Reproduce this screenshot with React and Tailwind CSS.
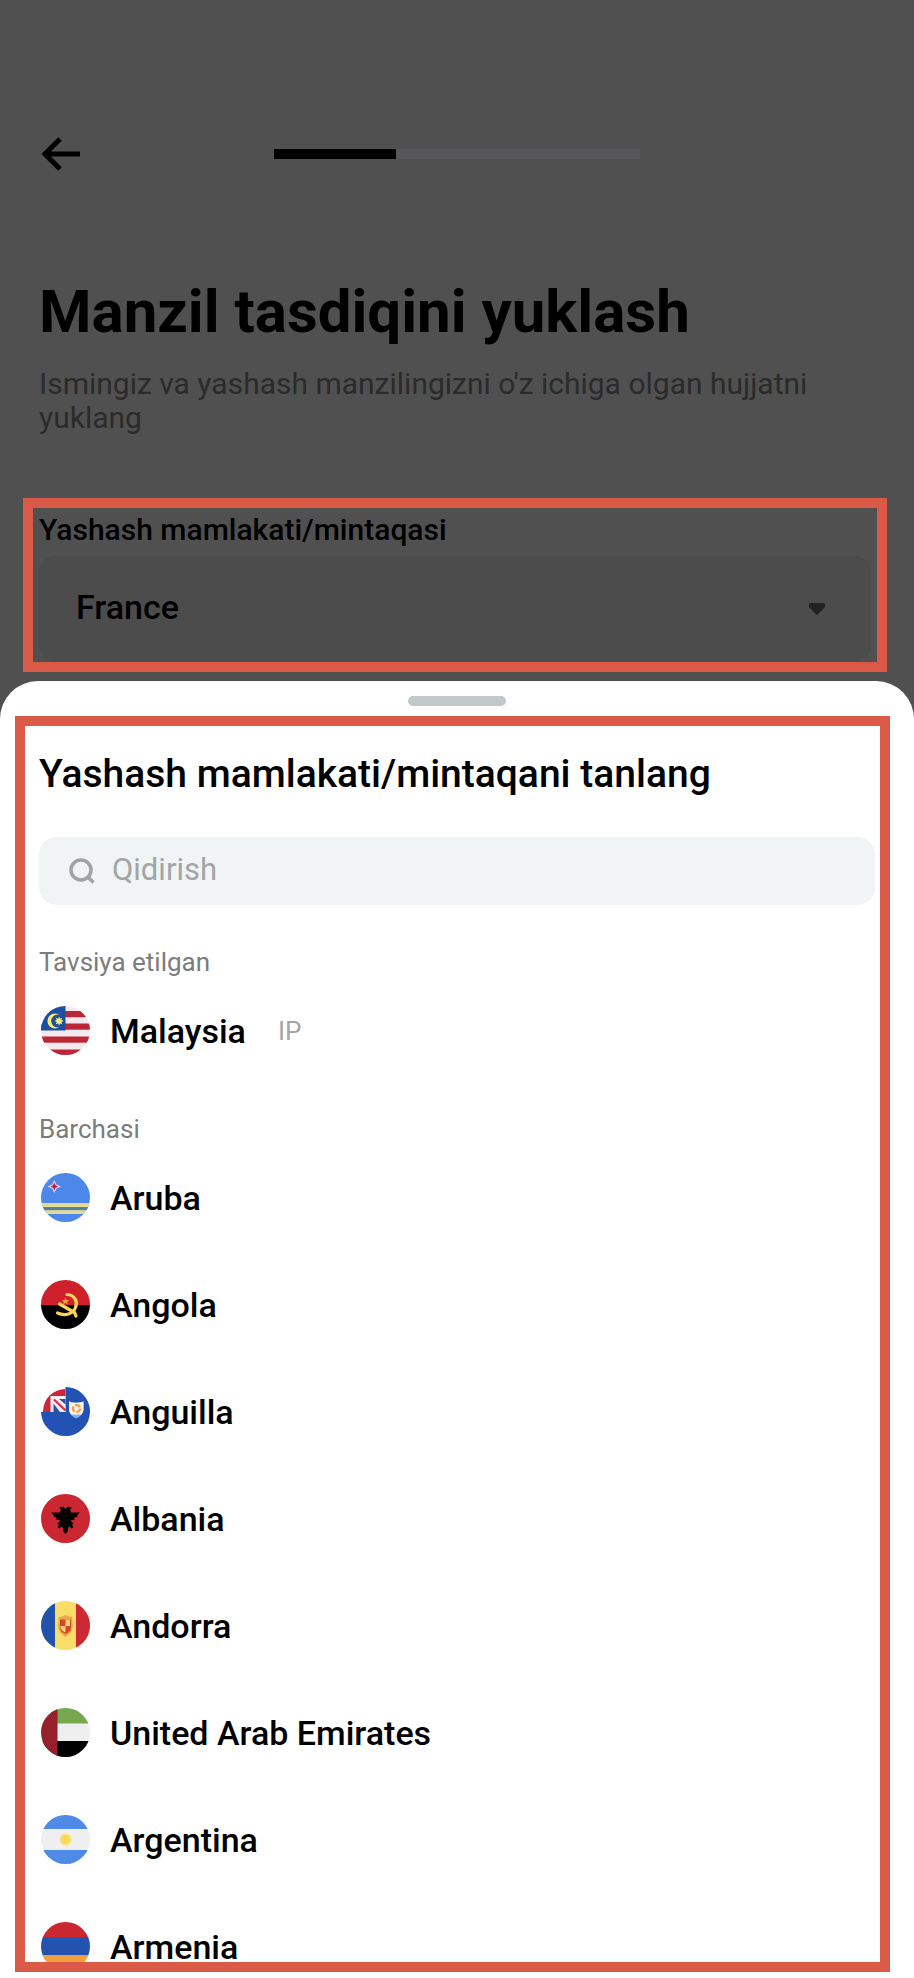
import { useState } from 'react';

function Flag({ children }) {
  return (
    <svg viewBox="0 0 49 49" className="size-[49px] shrink-0 rounded-full overflow-hidden" aria-hidden="true">
      {children}
    </svg>
  );
}

const flags = {
  Malaysia: (
    <Flag>
      <rect width="49" height="49" fill="#f3e9ef" />
      {[5, 17.5, 30.5, 43.5].map(y => <rect key={y} y={y} width="49" height="6.2" fill="#bb2737" />)}
      <rect width="24.5" height="24.5" fill="#1c4fa1" />
      <circle cx="14" cy="15" r="7.6" fill="#f6ec74" />
      <circle cx="16.6" cy="15" r="6.4" fill="#1c4fa1" />
      <path d="M18 10.500l1 2.300 2.300-1-.9 2.300 2.300.9-2.300 1 .9 2.300-2.300-.9-1 2.300-.9-2.300-2.300.9.9-2.300-2.300-1 2.300-.9-.9-2.300 2.300 1z" fill="#f6ec74" />
    </Flag>
  ),
  Aruba: (
    <Flag>
      <rect width="49" height="49" fill="#4c88ea" />
      <rect y="30" width="49" height="4.2" fill="#e4dc94" />
      <rect y="34.2" width="49" height="3" fill="#557f9f" />
      <rect y="37.2" width="49" height="3.8" fill="#e4dc94" />
      <path d="M13.3 7l2 4.5 4.6 2-4.6 2-2 4.6-2-4.6-4.6-2 4.6-2z" fill="#f7e4f2" />
      <path d="M13.3 9.6l1.3 2.7 2.7 1.2-2.7 1.3-1.3 2.7-1.3-2.7-2.7-1.3 2.7-1.2z" fill="#b51c4b" />
    </Flag>
  ),
  Angola: (
    <Flag>
      <rect width="49" height="25" fill="#cf202b" />
      <rect y="25" width="49" height="24" fill="#000" />
      <path d="M26 14.5C34 15 37 22 34.5 27.5C32 34 24 36.5 16.5 33" fill="none" stroke="#f8d355" strokeWidth="3.2" strokeLinecap="round" />
      <path d="M18.5 24l15 8.5 1.5 3.5" fill="none" stroke="#f8d355" strokeWidth="3.2" strokeLinecap="round" />
      <path d="M24.500 17.500l1.100 2.400 2.600.3-2 1.700.6 2.600-2.300-1.400-2.300 1.400.6-2.600-2-1.700 2.600-.3z" fill="#f39a48" />
    </Flag>
  ),
  Anguilla: (
    <Flag>
      <clipPath id="canton"><circle cx="24.5" cy="24.5" r="22.5" /></clipPath>
      <rect width="49" height="49" fill="#fff" />
      <path d="M24.5 0H49v49H0V25h24.5z" fill="#2252b4" />
      <g clipPath="url(#canton)">
        <rect width="24.5" height="25" fill="#c9283c" />
        <rect x="9.5" y="9" width="15" height="16" fill="#f6eef5" />
        <path d="M18 12h6.500v5.500zM12.500 16.500l6.500 8.500h-6.500z" fill="#2f4fa5" />
        <path d="M13 12.5l11.5 11" stroke="#cf3145" strokeWidth="2.2" />
      </g>
      <path d="M28 14.500q7 2.500 14.500 0v8q-.5 6-7.300 9-6.700-3-7.200-9z" fill="#7db4ea" />
      <path d="M28 14.500q7 2.500 14.500 0v8q0 3-2 5H30q-2-2-2-5z" fill="#f8f4ea" />
      <circle cx="35.5" cy="21.5" r="3.5" fill="none" stroke="#efa550" strokeWidth="2.5" strokeDasharray="5.5 1.8" />
    </Flag>
  ),
  Albania: (
    <Flag>
      <rect width="49" height="49" fill="#cb2733" />
      <path
        d="M24.5 15L22.500 12.800L18 13.500L20 15.500L19 18.500L10 18.500L13 21L12 22L16 24L15 25.500L19.500 26.500L16.500 29.500L18 31L16.500 33L18.500 34.500L20.500 32.500L22 34V37L24.500 40L27 37V34L28.500 32.500L30.500 34.500L32.500 33L31 31L32.500 29.500L29.500 26.500L34 25.500L33 24L37 22L36 21L39 18.500L30 18.500L29 15.500L31 13.500L26.500 12.800Z"
        fill="#050202"
      />
    </Flag>
  ),
  Andorra: (
    <Flag>
      <rect width="49" height="49" fill="#f9dd68" />
      <rect width="14" height="49" fill="#2352ad" />
      <rect x="35" width="14" height="49" fill="#cc2935" />
      <path d="M17.500 16q3.500.3 7-2 3.500 2.300 7 2-1 4 .5 8 .3 7-7.500 12-7.800-5-7.500-12 1.500-4 .5-8z" fill="#f0a443" />
      <path d="M19 18.500h11v8q0 4-5.500 6.500-5.500-2.500-5.500-6.500z" fill="#cb4a2f" />
      <path d="M24.500 18.500H29v6.500h-4.500zM19.500 25h5v6.500q-4.500-2-5-5z" fill="#f6cf72" />
    </Flag>
  ),
  'United Arab Emirates': (
    <Flag>
      <rect width="49" height="49" fill="#efefef" />
      <rect width="49" height="15.5" fill="#75a84f" />
      <rect y="33" width="49" height="16" fill="#000" />
      <rect width="16.5" height="49" fill="#96212c" />
    </Flag>
  ),
  Argentina: (
    <Flag>
      <rect width="49" height="49" fill="#efefef" />
      <rect width="49" height="14" fill="#4f8ae6" />
      <rect y="35" width="49" height="14" fill="#4f8ae6" />
      <circle cx="24.5" cy="24.5" r="4.5" fill="#f9d94f" />
      <circle cx="24.5" cy="24.5" r="4.8" fill="none" stroke="#f8de6d" strokeWidth="2.6" strokeDasharray="1.4 .6" />
    </Flag>
  ),
  Armenia: (
    <Flag>
      <rect width="49" height="16" fill="#cb2731" />
      <rect y="15" width="49" height="19" fill="#2352b0" />
      <rect y="33" width="49" height="16" fill="#f2a03d" />
    </Flag>
  )
};

const all = ['Aruba', 'Angola', 'Anguilla', 'Albania', 'Andorra', 'United Arab Emirates', 'Argentina', 'Armenia'];

function CountryRow({ name, note, onPick }) {
  return (
    <li>
      <button type="button" onClick={() => onPick(name)} className="flex w-full h-[107px] items-center pl-0.5 text-left">
        {flags[name]}
        <span className="ml-5 text-[34px] leading-10 font-medium">{name}</span>
        {note && <span className="ml-8 text-[26px] leading-[30px] text-[#a5a5a5]">{note}</span>}
      </button>
    </li>
  );
}

export default function App() {
  const [country, setCountry] = useState('France');
  const [query, setQuery] = useState('');

  const shown = all.filter(name => name.toLowerCase().includes(query.toLowerCase()));

  return (
    <div className="h-screen flex flex-col overflow-hidden bg-[#505050] text-black font-[Roboto,sans-serif]">
      <header className="grid grid-cols-[3fr_4fr_3fr] items-center pt-[130px]">
        <button type="button" aria-label="Orqaga" className="ml-10 size-12">
          <svg viewBox="0 0 48 48" className="size-12" fill="none" stroke="currentColor" strokeWidth="5">
            <path d="M40 24H5M20 9L5 24l15 15" />
          </svg>
        </button>
        <div className="h-2.5 bg-[#57575a]">
          <div className="h-full w-1/3 bg-black" />
        </div>
      </header>

      <section className="mt-[98px] px-[39px]">
        <h1 className="text-[60px] leading-[72px] font-bold">Manzil tasdiqini yuklash</h1>
        <p className="mt-[19px] text-[30px] leading-[34px] text-[#2b2b2b]">
          Ismingiz va yashash manzilingizni o'z ichiga olgan hujjatni yuklang
        </p>
      </section>

      <section className="mt-[63px] ml-[23px] mr-[27px] border-10 border-[#da5a47] px-1.5 pt-0.5 pb-px">
        <label htmlFor="country" className="block text-[30px] leading-10 font-medium">Yashash mamlakati/mintaqasi</label>
        <div className="mt-1.5 grid items-center">
          <select
            id="country"
            value={country}
            onChange={e => setCountry(e.target.value)}
            className="col-start-1 row-start-1 h-[105px] w-full appearance-none rounded-2xl bg-[#4c4c4d] pl-[37px] pb-0.5 text-[34px] font-medium"
          >
            {['France', 'Malaysia', ...all].map(name => <option key={name}>{name}</option>)}
          </select>
          <svg viewBox="0 0 16 12" className="col-start-1 row-start-1 mr-[46px] h-3 w-4 justify-self-end pointer-events-none" aria-hidden="true">
            <path d="M1 0h14q1 0 1 1v3L9 11.500q-1 .8-2 0L0 4V1q0-1 1-1z" fill="#202426" />
          </svg>
        </div>
      </section>

      <main className="mt-[9px] flex flex-1 min-h-0 flex-col rounded-t-[38px] bg-white pt-[15px] pb-1.5">
        <div className="mx-auto h-2.5 w-[98px] rounded-full bg-[#c0c8c9]" />
        <div className="mt-2.5 ml-[15px] mr-6 flex-1 min-h-0 overflow-hidden border-10 border-[#da5a47] pl-3.5 pr-[5px] pt-6">
          <h2 className="text-[39px] leading-12 font-medium">Yashash mamlakati/mintaqani tanlang</h2>

          <label className="mt-[39px] flex h-[68px] items-center rounded-[18px] bg-[#f0f4f5] pl-[30px]">
            <svg viewBox="0 0 26 26" className="size-[26px] shrink-0" fill="none" stroke="#a0a3a4" strokeWidth="3.5" aria-hidden="true">
              <circle cx="12" cy="12" r="10" />
              <path d="M18.5 18.5l6 6" />
            </svg>
            <input
              type="text"
              placeholder="Qidirish"
              aria-label="Qidirish"
              value={query}
              onChange={e => setQuery(e.target.value)}
              className="ml-[17px] flex-1 bg-transparent pb-0.5 text-[31px] outline-none placeholder:text-[#a2a5a6]"
            />
          </label>

          <h3 className="mt-[42px] text-[26px] leading-[30px] text-[#7c7c7c]">Tavsiya etilgan</h3>
          <ul>
            <CountryRow name="Malaysia" note="IP" onPick={setCountry} />
          </ul>

          <h3 className="mt-[30px] text-[26px] leading-[30px] text-[#7c7c7c]">Barchasi</h3>
          <ul>
            {shown.map(name => <CountryRow key={name} name={name} onPick={setCountry} />)}
          </ul>
        </div>
      </main>
    </div>
  );
}
